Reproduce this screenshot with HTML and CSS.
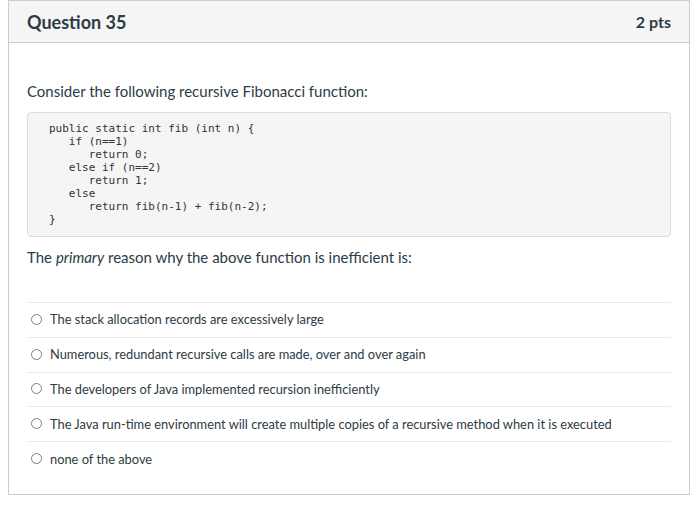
FILE: index.html
```html
<!DOCTYPE html>
<html>
<head>
<meta charset="utf-8">
<link rel="stylesheet" href="styles.css">
</head>
<body>
<div class="card">
  <div class="header">
    <span class="title">Question 35</span>
    <span class="pts">2 pts</span>
  </div>
  <div class="content">
    <p class="prompt">Consider the following recursive Fibonacci function:</p>
<pre class="code">public static int fib (int n) {
   if (n==1)
      return 0;
   else if (n==2)
      return 1;
   else
      return fib(n-1) + fib(n-2);
}</pre>
    <p class="prompt second">The <em>primary</em> reason why the above function is inefficient is:</p>
    <ul class="answers">
      <li><span class="radio"></span>The stack allocation records are excessively large</li>
      <li><span class="radio"></span>Numerous, redundant recursive calls are made, over and over again</li>
      <li><span class="radio"></span>The developers of Java implemented recursion inefficiently</li>
      <li><span class="radio"></span>The Java run-time environment will create multiple copies of a recursive method when it is executed</li>
      <li><span class="radio"></span>none of the above</li>
    </ul>
  </div>
</div>
</body>
</html>
```

FILE: styles.css
```css
html, body {
  margin: 0;
  padding: 0;
  background: #ffffff;
}
body {
  font-family: Lato, "Liberation Sans", sans-serif;
  color: #2d3b45;
}
.card {
  margin-left: 8px;
  width: 682px;
  border: 1px solid #c7cdd1;
  background: #fff;
  height: 495px;
  box-sizing: border-box;
}
.header {
  height: 42px;
  box-sizing: border-box;
  background: #f5f5f5;
  border-bottom: 1px solid #c7cdd1;
  display: flex;
  justify-content: space-between;
  align-items: center;
  padding: 0 18px 0 18px;
}
.title {
  font-size: 18px;
  font-weight: 700;
  color: #2d3b45;
}
.pts {
  font-size: 16px;
  font-weight: 700;
  color: #2d3b45;
}
.content {
  padding: 37px 18px 0 18px;
}
.prompt {
  margin: 0;
  font-size: 15px;
  line-height: 22px;
}
.second {
  margin-top: 9px;
}
.code {
  margin: 10px 0 0 0;
  background: #f5f5f5;
  border: 1px solid #dcdcdc;
  border-radius: 4px;
  padding: 9px 21px 10px 21px;
  font-family: "DejaVu Sans Mono", monospace;
  font-size: 11px;
  line-height: 13px;
  color: #333;
}
.answers {
  list-style: none;
  margin: 34px 0 0 0;
  padding: 0;
}
.answers li {
  box-sizing: border-box;
  border-top: 1px solid #e8eaec;
  height: 34.8px;
  padding-bottom: 1px;
  display: flex;
  align-items: center;
  font-size: 12.85px;
  color: #2d3b45;
}
.radio {
  width: 11px;
  height: 11px;
  border: 1px solid #737f88;
  border-radius: 50%;
  margin: 0 8px 0 4px;
  box-sizing: border-box;
  flex: none;
}
```
